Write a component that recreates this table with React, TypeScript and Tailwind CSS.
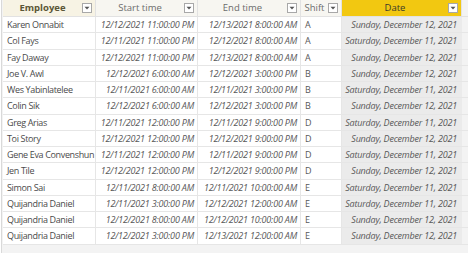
import React from "react";

type Row = [string, string, string, string, string];

const rows: Row[] = [
  ["Karen Onnabit", "12/12/2021 11:00:00 PM", "12/13/2021 8:00:00 AM", "A", "Sunday, December 12, 2021"],
  ["Col Fays", "12/11/2021 11:00:00 PM", "12/12/2021 8:00:00 AM", "A", "Saturday, December 11, 2021"],
  ["Fay Daway", "12/12/2021 11:00:00 PM", "12/13/2021 8:00:00 AM", "A", "Sunday, December 12, 2021"],
  ["Joe V. Awl", "12/12/2021 6:00:00 AM", "12/12/2021 3:00:00 PM", "B", "Sunday, December 12, 2021"],
  ["Wes Yabinlatelee", "12/11/2021 6:00:00 AM", "12/11/2021 3:00:00 PM", "B", "Saturday, December 11, 2021"],
  ["Colin Sik", "12/12/2021 6:00:00 AM", "12/12/2021 3:00:00 PM", "B", "Sunday, December 12, 2021"],
  ["Greg Arias", "12/11/2021 12:00:00 PM", "12/11/2021 9:00:00 PM", "D", "Saturday, December 11, 2021"],
  ["Toi Story", "12/12/2021 12:00:00 PM", "12/12/2021 9:00:00 PM", "D", "Sunday, December 12, 2021"],
  ["Gene Eva Convenshun", "12/11/2021 12:00:00 PM", "12/11/2021 9:00:00 PM", "D", "Saturday, December 11, 2021"],
  ["Jen Tile", "12/12/2021 12:00:00 PM", "12/12/2021 9:00:00 PM", "D", "Sunday, December 12, 2021"],
  ["Simon Sai", "12/11/2021 8:00:00 AM", "12/11/2021 10:00:00 AM", "E", "Saturday, December 11, 2021"],
  ["Quijandria Daniel", "12/11/2021 3:00:00 PM", "12/12/2021 12:00:00 AM", "E", "Saturday, December 11, 2021"],
  ["Quijandria Daniel", "12/12/2021 8:00:00 AM", "12/12/2021 10:00:00 AM", "E", "Sunday, December 12, 2021"],
  ["Quijandria Daniel", "12/12/2021 3:00:00 PM", "12/13/2021 12:00:00 AM", "E", "Sunday, December 12, 2021"],
];

function FilterIcon() {
  return (
    <span className="flex h-[10px] w-[10px] shrink-0 items-center justify-center border border-[#a8a8a8] bg-white">
      <svg width="6" height="4" viewBox="0 0 6 4">
        <path d="M0.5 0.8 L5.5 0.8 L3 3.4 Z" fill="#555" />
      </svg>
    </span>
  );
}

function HeaderCell({ label, width, bold, selected }: { label: string; width: string; bold?: boolean; selected?: boolean }) {
  return (
    <div
      className={`${width} flex h-full items-center border-r border-[#e2e2e2] pr-[3px] ${
        selected ? "bg-[#f2c811] text-[#3a3a2a]" : bold ? "bg-[#f7f3e4] font-bold text-[#5b5636]" : "bg-[#f7f6f1] text-[#6b6b6b]"
      }`}
    >
      <span className="flex-1 text-center">{label}</span>
      <FilterIcon />
    </div>
  );
}

export default function App() {
  return (
    <div className="h-[253px] w-[474px] bg-white" style={{ fontFamily: '"Open Sans", "Noto Sans", sans-serif' }}>
      <div className="ml-[1px] h-full w-[467px] border-l border-[#d9d9d9] bg-[#f3f3f3] pl-[1px] text-[9px] whitespace-nowrap">
        {/* header */}
        <div className="flex h-[17px] border-b border-[#e2e2e2] text-[9.5px]">
          <HeaderCell label="Employee" width="w-[93px]" bold />
          <HeaderCell label="Start time" width="w-[102px]" />
          <HeaderCell label="End time" width="w-[103px]" />
          <HeaderCell label="Shift" width="w-[41px]" />
          <HeaderCell label="Date" width="w-[120px]" selected />
        </div>

        {/* rows */}
        {rows.map((r, i) => (
          <div key={i} className="flex h-[16.25px] border-b border-[#e6e6e6] leading-none tracking-[-0.2px]">
            <div className="flex w-[93px] items-center overflow-hidden border-r border-[#e6e6e6] bg-white pl-[4px] tracking-[-0.35px] text-[#4a4a4a]">{r[0]}</div>
            <div className="flex w-[102px] items-center justify-end border-r border-[#e6e6e6] bg-white pr-[3px] italic text-[#585858]">{r[1]}</div>
            <div className="flex w-[103px] items-center justify-end border-r border-[#e6e6e6] bg-white pr-[3px] italic text-[#585858]">{r[2]}</div>
            <div className="flex w-[41px] items-center border-r border-[#e6e6e6] bg-white pl-[4px] text-[#585858]">{r[3]}</div>
            <div className="flex w-[120px] items-center justify-end bg-[#ebebeb] pr-[5px] italic text-[#585858]">{r[4]}</div>
          </div>
        ))}
      </div>
    </div>
  );
}
